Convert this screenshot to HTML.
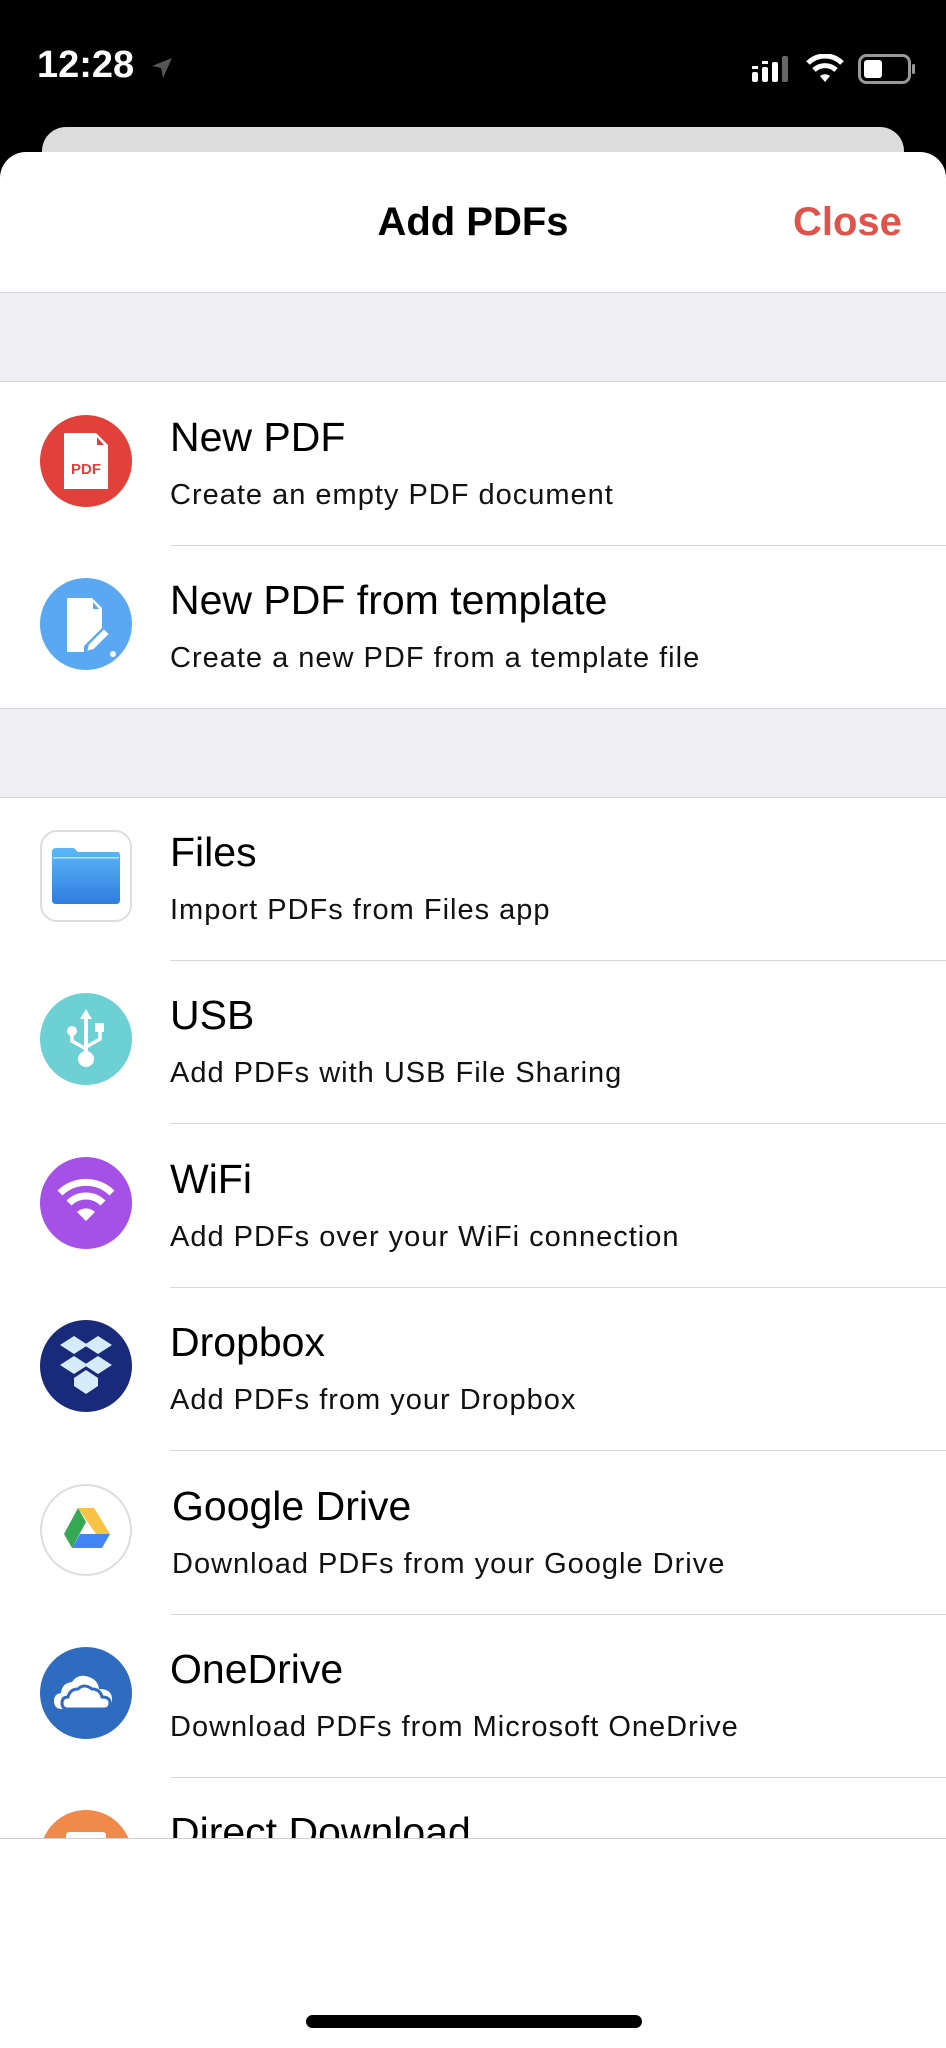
<!DOCTYPE html>
<html><head><meta charset="utf-8"><style>
*{margin:0;padding:0;box-sizing:border-box}
body{width:946px;height:2048px;background:#000;position:relative;overflow:hidden;font-family:"Liberation Sans",sans-serif}
.abs{position:absolute}
.sheet{position:absolute;left:0;top:152px;width:946px;height:1896px;background:#fff;border-radius:26px 26px 0 0;overflow:hidden}
.gray{position:absolute;left:0;width:946px;background:#efeff4;border-top:1.5px solid #d4d4d8;border-bottom:1.5px solid #d4d4d8}
.row{position:absolute;left:0;width:946px;height:164px}
.row .sep{position:absolute;left:170px;right:0;bottom:0;height:1.5px;background:#d8d8dc}
.row .t{position:absolute;left:170px;top:32px;font-size:41px;color:#000;white-space:nowrap}
.row .s{position:absolute;left:170px;top:97px;font-size:29px;letter-spacing:1px;color:#111;white-space:nowrap}
.row svg{position:absolute;left:40px;top:33px}
</style></head><body>
<div class="abs" style="left:37px;top:44px;color:#fff;font-size:38px;font-weight:bold">12:28</div>
<svg class="abs" style="left:150px;top:56px" width="24" height="24" viewBox="0 0 24 24"><path d="M22 2 L2 10 L11 12 L13 22 Z" fill="#555"/></svg>
<svg class="abs" style="left:750px;top:54px" width="44" height="30" viewBox="0 0 44 30">
<rect x="2" y="18" width="6" height="10" rx="2" fill="#fff"/><rect x="12" y="13" width="6" height="15" rx="2" fill="#fff"/><rect x="22" y="8" width="6" height="20" rx="2" fill="#fff"/><rect x="32" y="2" width="6" height="26" rx="2" fill="#666"/>
<rect x="2" y="12" width="6" height="3" fill="#fff"/><rect x="12" y="7" width="6" height="3" fill="#fff"/></svg>
<svg class="abs" style="left:806px;top:54px" width="38" height="30" viewBox="0 0 38 30"><path d="M19 28 L24 22 A8 8 0 0 0 14 22 Z" fill="#fff"/><path d="M8 16 A16 16 0 0 1 30 16" stroke="#fff" stroke-width="5" fill="none"/><path d="M2 9 A24 24 0 0 1 36 9" stroke="#fff" stroke-width="5" fill="none"/></svg>
<svg class="abs" style="left:858px;top:54px" width="60" height="30" viewBox="0 0 60 30"><rect x="1.5" y="1.5" width="50" height="27" rx="7" stroke="#999" stroke-width="3" fill="none"/><rect x="6" y="6" width="18" height="18" rx="3" fill="#fff"/><rect x="54" y="10" width="3" height="10" rx="1.5" fill="#999"/></svg>
<div class="abs" style="left:42px;top:127px;width:862px;height:60px;background:#dcdcdc;border-radius:24px 24px 0 0"></div>
<div class="sheet">
 <div class="abs" style="left:0;top:48px;width:946px;text-align:center;font-size:40px;font-weight:bold">Add PDFs</div>
 <div class="abs" style="left:793px;top:48px;font-size:40px;font-weight:bold;color:#e0534a">Close</div>
 <div class="gray" style="top:140px;height:90px"></div>
 <div class="row" style="top:230px"><svg width="92" height="92" viewBox="0 0 92 92"><circle cx="46" cy="46" r="46" fill="#e2403a"/><path d="M24 18 H56 L68 30 V74 H24 Z" fill="#fff"/><path d="M57 22 L64 30 H57 Z" fill="#e2403a"/><text x="46" y="59" text-anchor="middle" font-size="15" font-weight="bold" fill="#e2403a" font-family="Liberation Sans">PDF</text></svg><div class="t">New PDF</div><div class="s">Create an empty PDF document</div><div class="sep"></div></div>
 <div class="row" style="top:393px"><svg width="92" height="92" viewBox="0 0 92 92"><circle cx="46" cy="46" r="46" fill="#5aa8f2"/><path d="M27 20 H52 L62 30 V50 L44 68 V74 H27 Z" fill="#fff"/><path d="M53 24 L59 31 H53 Z" fill="#5aa8f2"/><path d="M48 66 L64 50 L70 56 L54 72 L46 74 Z" fill="#fff" stroke="#5aa8f2" stroke-width="2"/><circle cx="73" cy="76" r="3" fill="#fff"/></svg><div class="t">New PDF from template</div><div class="s">Create a new PDF from a template file</div></div>
 <div class="gray" style="top:556px;height:90px"></div>
 <div class="row" style="top:645px"><svg width="92" height="92" viewBox="0 0 92 92"><rect x="1" y="1" width="90" height="90" rx="16" fill="#fff" stroke="#ddd" stroke-width="2"/><defs><linearGradient id="fg" x1="0" y1="0" x2="0" y2="1"><stop offset="0" stop-color="#5db8f6"/><stop offset="1" stop-color="#2f7de0"/></linearGradient></defs><path d="M12 22 Q12 18 16 18 H34 L38 22 H78 Q80 22 80 26 V70 Q80 74 76 74 H16 Q12 74 12 70 Z" fill="url(#fg)"/><rect x="13" y="27" width="66" height="1.5" fill="#bfe0ff"/></svg><div class="t">Files</div><div class="s">Import PDFs from Files app</div><div class="sep"></div></div>
 <div class="row" style="top:808px"><svg width="92" height="92" viewBox="0 0 92 92"><circle cx="46" cy="46" r="46" fill="#6dd0d4"/><path d="M46 16 L52 26 H48 V62 H44 V26 H40 Z" fill="#fff"/><circle cx="46" cy="66" r="8" fill="#fff"/><circle cx="32" cy="38" r="5" fill="#fff"/><rect x="55" y="30" width="9" height="9" fill="#fff"/><path d="M32 40 V48 L46 56 M60 38 V46 L46 54" stroke="#fff" stroke-width="3.5" fill="none"/></svg><div class="t">USB</div><div class="s">Add PDFs with USB File Sharing</div><div class="sep"></div></div>
 <div class="row" style="top:972px"><svg width="92" height="92" viewBox="0 0 92 92"><circle cx="46" cy="46" r="46" fill="#a551e8"/><path d="M46 64 L37 55 A13 13 0 0 1 55 55 Z" fill="#fff"/><path d="M29 46 A24 24 0 0 1 63 46" stroke="#fff" stroke-width="7" fill="none"/><path d="M20 36 A37 37 0 0 1 72 36" stroke="#fff" stroke-width="7" fill="none"/></svg><div class="t">WiFi</div><div class="s">Add PDFs over your WiFi connection</div><div class="sep"></div></div>
 <div class="row" style="top:1135px"><svg width="92" height="92" viewBox="0 0 92 92"><circle cx="46" cy="46" r="46" fill="#1a2a7a"/><g fill="#d6ecfa"><path d="M34 16 L48 25 L34 34 L20 25 Z"/><path d="M58 16 L72 25 L58 34 L44 25 Z"/><path d="M34 36 L48 45 L34 54 L20 45 Z"/><path d="M58 36 L72 45 L58 54 L44 45 Z"/><path d="M34 58 L46 50 L58 58 V66 L46 74 L34 66 Z"/></g></svg><div class="t">Dropbox</div><div class="s">Add PDFs from your Dropbox</div><div class="sep"></div></div>
 <div class="row" style="top:1299px"><svg width="92" height="92" viewBox="0 0 92 92"><circle cx="46" cy="46" r="45" fill="#fff" stroke="#ddd" stroke-width="2"/><path d="M38 24 L24 50 L32 64 L46 38 Z" fill="#34a853"/><path d="M38 24 H54 L70 50 H56 Z" fill="#f6c344"/><path d="M32 64 L40 50 H70 L62 64 Z" fill="#4285f4"/></svg><div class="t" style="left:172px">Google Drive</div><div class="s" style="left:172px">Download PDFs from your Google Drive</div><div class="sep"></div></div>
 <div class="row" style="top:1462px"><svg width="92" height="92" viewBox="0 0 92 92"><circle cx="46" cy="46" r="46" fill="#2f6bbf"/><path d="M22 62 Q14 62 14 54 Q14 47 21 46 Q22 36 32 35 Q38 26 49 30 Q58 33 59 42 Q72 42 72 52 Q72 62 62 62 Z" fill="#fff"/><path d="M28 62 Q22 62 22 56 Q22 50 28 50 Q30 42 38 42 Q44 36 52 42 Q60 42 62 50 Q70 50 70 56 Q70 62 64 62 Z" fill="none" stroke="#2f6bbf" stroke-width="3"/></svg><div class="t">OneDrive</div><div class="s">Download PDFs from Microsoft OneDrive</div><div class="sep"></div></div>
 <div class="abs" style="left:0;top:1625px;width:946px;height:61px;overflow:hidden"><svg class="abs" style="left:40px;top:33px" width="92" height="92" viewBox="0 0 92 92"><circle cx="46" cy="46" r="46" fill="#ef8a4a"/><rect x="26" y="22" width="40" height="20" rx="3" fill="#fff"/></svg><div class="abs" style="left:170px;top:32px;font-size:41px">Direct Download</div></div>
 <div class="abs" style="left:0;top:1686px;width:946px;height:210px;background:#fff;border-top:1.5px solid #cfcfd3"></div>
 <div class="abs" style="left:306px;top:1863px;width:336px;height:13px;border-radius:7px;background:#000"></div>
</div>
</body></html>
